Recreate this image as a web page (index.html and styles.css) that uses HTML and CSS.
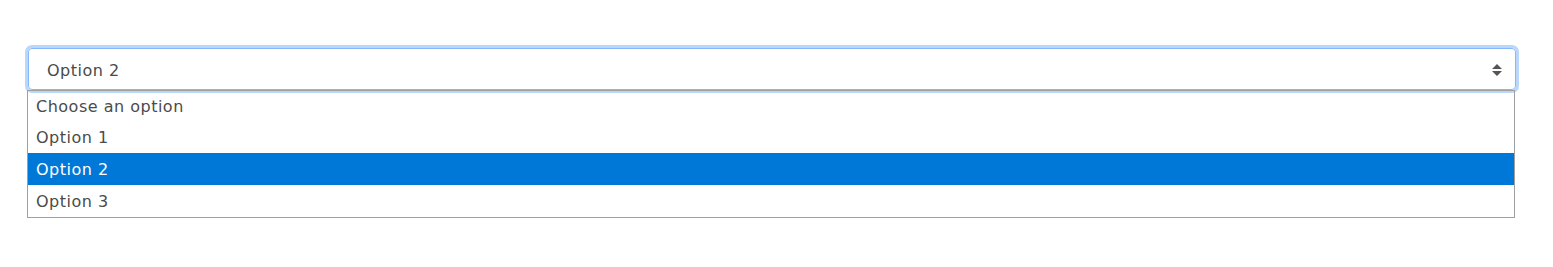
FILE: index.html
```html
<!DOCTYPE html>
<html>
<head>
<meta charset="utf-8">
<link rel="stylesheet" href="styles.css">
</head>
<body>
<div class="wrap">
  <div class="select">
    <span class="value">Option 2</span>
    <svg class="caret" width="10" height="12" viewBox="0 0 10 12"><path d="M5 0 L10 5 L0 5 Z M0 7 L10 7 L5 12 Z" fill="#555"/></svg>
  </div>
  <ul class="list">
    <li>Choose an option</li>
    <li>Option 1</li>
    <li class="sel">Option 2</li>
    <li>Option 3</li>
  </ul>
</div>
</body>
</html>
```
FILE: styles.css
```css
html, body { margin: 0; padding: 0; background: #fff; }
body { font-family: "DejaVu Sans", "Open Sans", sans-serif; color: #4b4b4b; }
.wrap { padding: 48px 37px 0 27px; }
.select {
  margin-left: 1px;
  height: 42px;
  box-sizing: border-box;
  border: 1px solid #86b7fe;
  border-radius: 4px;
  box-shadow: 0 0 0 3px #b9d6fb;
  display: flex;
  align-items: center;
  justify-content: space-between;
  padding: 2px 13px 0 18px;
  font-size: 16px;
  letter-spacing: 0.5px;
  color: #4a4a4a;
}
.caret { display: block; }
.list {
  list-style: none;
  margin: 0;
  padding: 0;
  border: 1px solid #a0a0a0;
  width: 1488px;
  box-sizing: border-box;
  font-size: 16px;
  letter-spacing: 0.5px;
}
.list li { height: 32px; line-height: 33px; padding-left: 8px; }
.list li:first-child { height: 30px; line-height: 31px; }
.list li.sel { background: #0078d7; color: #fff; }
```
